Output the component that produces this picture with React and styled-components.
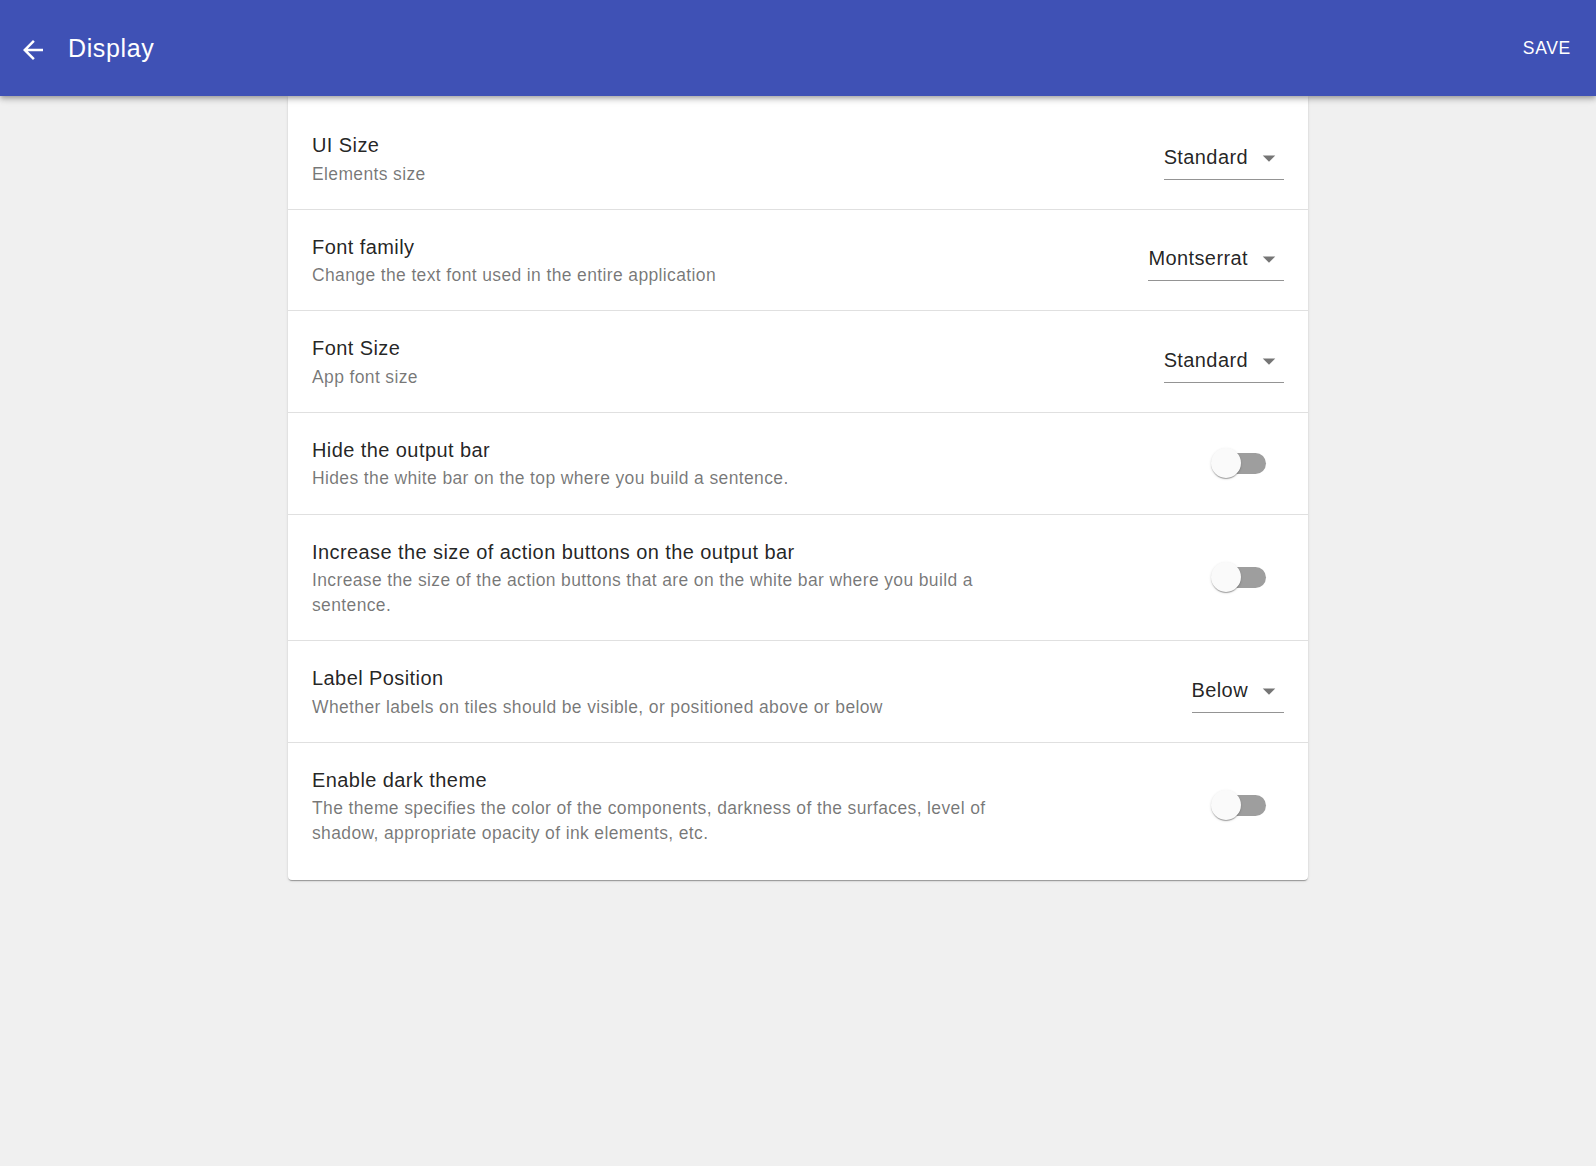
import React from 'react';
import styled, { createGlobalStyle } from 'styled-components';

const GlobalStyle = createGlobalStyle`
    * {
        box-sizing: border-box;
    }
    body {
        margin: 0;
        background: #f0f0f0;
        font-family: "Liberation Sans", Arial, sans-serif;
        color: rgba(0, 0, 0, 0.87);
    }
`;

const Page = styled.div`
    min-height: 100vh;
    display: flex;
    flex-direction: column;
`;

const AppBar = styled.header`
    position: relative;
    z-index: 2;
    height: 96px;
    background: #3f51b5;
    color: #fff;
    box-shadow: 0px 2px 4px -1px rgba(0, 0, 0, 0.2), 0px 4px 5px 0px rgba(0, 0, 0, 0.14), 0px 1px 10px 0px rgba(0, 0, 0, 0.12);
`;

const Toolbar = styled.div`
    height: 100%;
    display: flex;
    align-items: center;
    padding: 0 17px 0 18px;
`;

const BackButton = styled.button`
    width: 30px;
    height: 30px;
    margin-top: 4px;
    padding: 0;
    border: 0;
    background: none;
    color: #fff;
    display: flex;
    cursor: pointer;
`;

const Title = styled.h1`
    margin: 0 0 0 20px;
    flex: 1;
    font-size: 25px;
    font-weight: 400;
    line-height: 1.6;
    letter-spacing: 0.025em;
`;

const SaveButton = styled.button`
    border: 0;
    background: none;
    color: #fff;
    padding: 6px 8px;
    font-family: inherit;
    font-size: 17.5px;
    letter-spacing: 0.04em;
    text-transform: uppercase;
    cursor: pointer;
`;

const Main = styled.main`
    display: flex;
    justify-content: center;
`;

const Card = styled.section`
    width: 1020px;
    background: #fff;
    border-radius: 0 0 4px 4px;
    box-shadow: 0px 2px 1px -1px rgba(0, 0, 0, 0.2), 0px 1px 1px 0px rgba(0, 0, 0, 0.14), 0px 1px 3px 0px rgba(0, 0, 0, 0.12);
    padding: 12px 0;
`;

const Row = styled.div`
    display: flex;
    align-items: center;
    padding: 22px 24px;
    border-bottom: ${props => props.last ? 'none' : '1px solid rgba(0, 0, 0, 0.12)'};
`;

const TextBlock = styled.div`
    flex: 1;
    min-width: 0;
`;

const Primary = styled.div`
    max-width: 700px;
    font-size: 20px;
    line-height: 1.5;
    letter-spacing: 0.021em;
    color: rgba(0, 0, 0, 0.87);
    margin-bottom: 1.5px;
`;

const Secondary = styled.div`
    max-width: 700px;
    font-size: 17.5px;
    line-height: 1.43;
    letter-spacing: 0.021em;
    color: rgba(0, 0, 0, 0.54);
`;

const SelectRoot = styled.div`
    display: flex;
    align-items: center;
    gap: 6px;
    margin-top: 3px;
    padding: 6px 0 9px;
    border-bottom: 1px solid rgba(0, 0, 0, 0.42);
    cursor: pointer;
`;

const SelectValue = styled.span`
    font-size: 20px;
    line-height: 1.1876em;
    letter-spacing: 0.02em;
    color: rgba(0, 0, 0, 0.87);
`;

const SelectArrow = styled.svg`
    width: 30px;
    height: 30px;
    margin: -4px 0 -4px;
    fill: rgba(0, 0, 0, 0.54);
    flex-shrink: 0;
`;

const SwitchRoot = styled.span`
    display: inline-flex;
    padding: 18px;
    cursor: pointer;
`;

const Track = styled.span`
    display: flex;
    align-items: center;
    width: 51px;
    height: 21px;
    border-radius: 10.5px;
    background: ${props => props.on ? '#7986cb' : '#9e9e9e'};
`;

const Thumb = styled.span`
    width: 30px;
    height: 30px;
    margin-left: ${props => props.on ? '25px' : '-4px'};
    border-radius: 50%;
    background: ${props => props.on ? '#3f51b5' : '#fafafa'};
    box-shadow: 0px 2px 1px -1px rgba(0, 0, 0, 0.2), 0px 1px 1px 0px rgba(0, 0, 0, 0.14), 0px 1px 3px 0px rgba(0, 0, 0, 0.12);
    flex-shrink: 0;
`;

const settings = [
    { title: 'UI Size', text: 'Elements size', select: 'Standard' },
    { title: 'Font family', text: 'Change the text font used in the entire application', select: 'Montserrat' },
    { title: 'Font Size', text: 'App font size', select: 'Standard' },
    { title: 'Hide the output bar', text: 'Hides the white bar on the top where you build a sentence.', toggle: false },
    { title: 'Increase the size of action buttons on the output bar', text: 'Increase the size of the action buttons that are on the white bar where you build a sentence.', toggle: false },
    { title: 'Label Position', text: 'Whether labels on tiles should be visible, or positioned above or below', select: 'Below' },
    { title: 'Enable dark theme', text: 'The theme specifies the color of the components, darkness of the surfaces, level of shadow, appropriate opacity of ink elements, etc.', toggle: false },
];

function Select({ value }) {
    return (
        <SelectRoot>
            <SelectValue>{value}</SelectValue>
            <SelectArrow viewBox="0 0 24 24">
                <path d="M7 10l5 5 5-5z" />
            </SelectArrow>
        </SelectRoot>
    );
}

function Switch({ on }) {
    return (
        <SwitchRoot>
            <Track on={on}>
                <Thumb on={on} />
            </Track>
        </SwitchRoot>
    );
}

export default function App() {
    return (
        <Page>
            <GlobalStyle />
            <AppBar>
                <Toolbar>
                    <BackButton aria-label="Back">
                        <svg viewBox="0 0 24 24" width="30" height="30" fill="currentColor">
                            <path d="M20 11H7.83l5.59-5.59L12 4l-8 8 8 8 1.41-1.41L7.83 13H20v-2z" />
                        </svg>
                    </BackButton>
                    <Title>Display</Title>
                    <SaveButton>Save</SaveButton>
                </Toolbar>
            </AppBar>
            <Main>
                <Card>
                    {settings.map((item, i) => (
                        <Row key={item.title} last={i === settings.length - 1}>
                            <TextBlock>
                                <Primary>{item.title}</Primary>
                                <Secondary>{item.text}</Secondary>
                            </TextBlock>
                            {item.select
                                ? <Select value={item.select} />
                                : <Switch on={item.toggle} />}
                        </Row>
                    ))}
                </Card>
            </Main>
        </Page>
    );
}
